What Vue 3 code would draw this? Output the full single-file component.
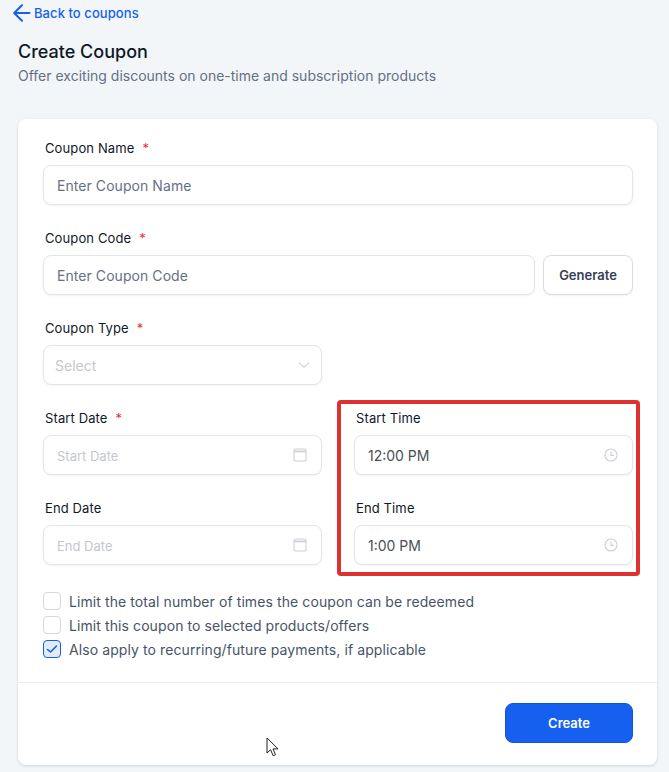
<script setup>
const checks = [
  { text: 'Limit the total number of times the coupon can be redeemed', on: false },
  { text: 'Limit this coupon to selected products/offers', on: false },
  { text: 'Also apply to recurring/future payments, if applicable', on: true },
]
</script>

<template>
  <div class="page">
    <a class="back">
      <svg width="18" height="18" viewBox="0 0 18 18" fill="none" stroke="#1660f0" stroke-width="2" stroke-linecap="round" stroke-linejoin="round"><path d="M16.5 9H1.2M9 1.2L1.2 9 9 16.8"/></svg>
      <span>Back to coupons</span>
    </a>
    <h1>Create Coupon</h1>
    <p class="sub">Offer exciting discounts on one-time and subscription products</p>

    <section class="card">
      <div class="body">
        <div class="field">
          <label>Coupon Name<i>*</i></label>
          <div class="input ph">Enter Coupon Name</div>
        </div>
        <div class="field">
          <label>Coupon Code<i>*</i></label>
          <div class="code-row">
            <div class="input ph grow">Enter Coupon Code</div>
            <button class="gen">Generate</button>
          </div>
        </div>
        <div class="grid">
          <div class="field">
            <label>Coupon Type<i>*</i></label>
            <div class="input off sel">
              <span>Select</span>
              <svg width="14" height="14" viewBox="0 0 14 14" fill="none" stroke="#cfd2d8" stroke-width="1.1"><path d="M2.2 4.6L7 9.4l4.8-4.8"/></svg>
            </div>
          </div>
          <div></div>
          <div class="field">
            <label>Start Date<i>*</i></label>
            <div class="input off date">
              <span>Start Date</span>
              <svg width="14" height="14" viewBox="0 0 14 14" fill="none" stroke="#cdd0d6" stroke-width="1.1"><rect x="1" y="1" width="12" height="12" rx="1"/><path d="M1 3.4h12" stroke-width="1.8"/></svg>
            </div>
          </div>
          <div class="field">
            <label>Start Time</label>
            <div class="input time">
              <span>12:00 PM</span>
              <svg width="14" height="14" viewBox="0 0 14 14" fill="none" stroke="#cdd0d6" stroke-width="1.1"><circle cx="7" cy="7" r="6"/><path d="M7 3.5V7.4h3"/></svg>
            </div>
          </div>
          <div class="field">
            <label>End Date</label>
            <div class="input off date">
              <span>End Date</span>
              <svg width="14" height="14" viewBox="0 0 14 14" fill="none" stroke="#cdd0d6" stroke-width="1.1"><rect x="1" y="1" width="12" height="12" rx="1"/><path d="M1 3.4h12" stroke-width="1.8"/></svg>
            </div>
          </div>
          <div class="field">
            <label>End Time</label>
            <div class="input time">
              <span>1:00 PM</span>
              <svg width="14" height="14" viewBox="0 0 14 14" fill="none" stroke="#cdd0d6" stroke-width="1.1"><circle cx="7" cy="7" r="6"/><path d="M7 3.5V7.4h3"/></svg>
            </div>
          </div>
        </div>
        <div class="checks">
          <div v-for="c in checks" :key="c.text" class="check">
            <span class="box" :class="{ on: c.on }">
              <svg v-if="c.on" width="12" height="10" viewBox="0 0 12 10" fill="none" stroke="#1660f0" stroke-width="1.6" stroke-linecap="round" stroke-linejoin="round"><path d="M1.5 5.5L4.5 8l6-6"/></svg>
            </span>
            <span>{{ c.text }}</span>
          </div>
        </div>
      </div>
      <div class="foot">
        <button class="create">Create</button>
      </div>
    </section>

    <div class="highlight"></div>
    <svg class="cursor" width="14" height="20" viewBox="0 0 14 20"><path d="M1 1v15l3.6-3.3 2.5 6 2.4-1-2.5-5.8H12z" fill="#fff" stroke="#222" stroke-width="1"/></svg>
  </div>
</template>

<style scoped>
.page { position: relative; width: 669px; height: 772px; overflow: hidden; background: #f2f6f9; font-family: Inter, "Liberation Sans", sans-serif; box-sizing: border-box; padding-left: 18px; padding-right: 12px; }
.back { display: flex; align-items: center; gap: 3px; height: 26px; margin-left: -5px; font-size: 13px; letter-spacing: .07px; font-weight: 500; color: #1660f0; }
h1 { margin: 15px 0 0; font-size: 18px; line-height: 22px; font-weight: 500; color: #101828; }
.sub { margin: 2px 0 0; font-size: 14px; line-height: 22px; color: #667085; }
.card { margin-top: 32px; height: 646px; box-sizing: border-box; background: #fff; border-radius: 8px; box-shadow: 0 1px 3px rgba(16, 24, 40, .16); display: flex; flex-direction: column; }
.body { flex: 1; padding: 18px 24px 0 25px; display: flex; flex-direction: column; gap: 22px; }
.field { display: flex; flex-direction: column; }
label { height: 22px; margin: 0 0 6px 2px; font-size: 13px; letter-spacing: .12px; line-height: 22px; color: #101828; }
label i { font-style: normal; color: #e5343a; margin-left: 8px; }
.input { box-sizing: border-box; height: 40px; flex: none; border: 1px solid #e2e5ea; border-radius: 8px; background: #fff; box-shadow: 0 1px 2px rgba(16, 24, 40, .05); display: flex; align-items: center; justify-content: space-between; padding: 0 14px 0 13px; font-size: 14px; }
.grow { flex: 1; min-width: 0; }
.ph { color: #667085; letter-spacing: .06px; }
.off { color: #c4c7cd; }
.sel { padding-left: 11px; padding-right: 10px; }
.date { font-size: 13px; }
.date span { padding-top: 2px; }
.time { color: #4a4f57; padding-left: 13px; }
.code-row { display: flex; gap: 8px; }
.gen { box-sizing: border-box; width: 90px; height: 40px; border: 1px solid #d9dce3; border-radius: 8px; background: #fff; box-shadow: 0 1px 2px rgba(16, 24, 40, .05); font: 600 13px Inter, "Liberation Sans", sans-serif; color: #344054; }
.grid { display: grid; grid-template-columns: 279px 279px; column-gap: 32px; row-gap: 22px; }
.checks { margin-top: 5px; display: flex; flex-direction: column; gap: 6px; }
.check { display: flex; align-items: center; gap: 8px; height: 18px; font-size: 14px; letter-spacing: .09px; color: #475467; }
.box { box-sizing: border-box; width: 18px; height: 18px; border: 1px solid #d5d8de; border-radius: 4px; display: flex; align-items: center; justify-content: center; background: #fff; }
.box.on { border-color: #1660f0; background: #e2ebfd; }
.foot { border-top: 1px solid #eceef1; height: 83px; box-sizing: border-box; display: flex; justify-content: flex-end; align-items: flex-start; padding: 20px 24px 0 0; }
.create { width: 128px; height: 40px; border: 1px solid #0f55de; border-radius: 8px; background: #1660f0; color: #fff; font: 600 13px Inter, "Liberation Sans", sans-serif; }
.highlight { position: absolute; left: 337px; top: 400px; width: 303px; height: 176px; box-sizing: border-box; border: 4px solid #e03131; border-radius: 4px; }
.cursor { position: absolute; left: 266px; top: 737px; }
</style>

<style>
html, body { margin: 0; background: #f2f6f9; }
</style>
